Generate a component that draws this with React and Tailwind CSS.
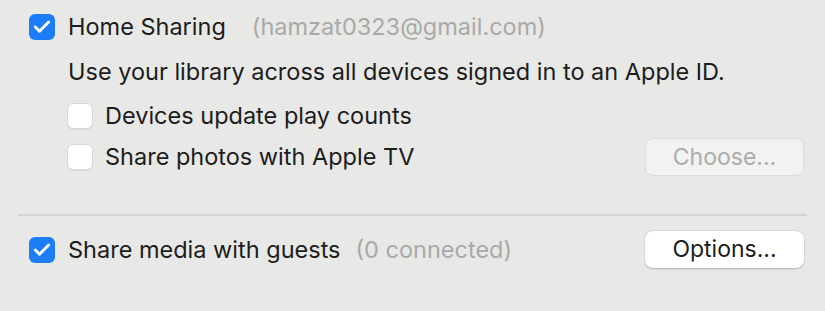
import { Check } from 'lucide-react';

function Checkbox({ checked }) {
    if (checked) {
        return (
            <span className="flex h-[26px] w-[26px] shrink-0 items-center justify-center rounded-[6px] bg-[#1d7df6]">
                <Check className="h-[20px] w-[20px] text-white" strokeWidth={3.5} />
            </span>
        );
    }
    return (
        <span className="h-[26px] w-[26px] shrink-0 rounded-[6px] border border-[#d6d6d4] bg-white shadow-[0_1px_1px_rgba(0,0,0,0.06)]" />
    );
}

function Button({ children, disabled }) {
    return (
        <button
            className={
                disabled
                    ? 'h-[38px] w-[159px] rounded-[8px] border border-[#dcdcda] bg-[#f2f2f1] text-[23px] text-[#acacac]'
                    : 'h-[37px] w-[159px] rounded-[8px] bg-white text-[23px] text-[#1c1c1c] shadow-[0_0.5px_2px_rgba(0,0,0,0.25)]'
            }
        >
            {children}
        </button>
    );
}

export default function App() {
    return (
        <div
            className="h-[311px] w-[825px] overflow-hidden bg-[#e8e8e6] text-[23.5px] text-[#1c1c1c]"
            style={{ fontFamily: 'Inter, "Liberation Sans", sans-serif' }}
        >
            <div className="flex flex-col pl-[29px] pr-[21px] pt-[13px]">
                <div className="flex h-[27px] items-center gap-[13px]">
                    <Checkbox checked />
                    <span>Home Sharing</span>
                    <span className="ml-[13px] text-[#a9a9a9]">(hamzat0323@gmail.com)</span>
                </div>
                <div className="ml-[39px] mt-[18px] flex h-[27px] items-center">
                    Use your library across all devices signed in to an Apple ID.
                </div>
                <div className="ml-[38px] mt-[17px] flex h-[27px] items-center gap-[12px]">
                    <Checkbox />
                    <span>Devices update play counts</span>
                </div>
                <div className="ml-[38px] mt-[9px] flex items-center justify-between">
                    <div className="flex h-[27px] items-center gap-[12px]">
                        <Checkbox />
                        <span>Share photos with Apple TV</span>
                    </div>
                    <Button disabled>Choose...</Button>
                </div>
            </div>
            <div className="ml-[18px] mr-[18px] mt-[38px] h-[2px] bg-[#d3d3d1]" />
            <div className="mt-[15px] flex items-center justify-between pl-[29px] pr-[21px]">
                <div className="flex items-center gap-[13px]">
                    <Checkbox checked />
                    <span>Share media with guests</span>
                    <span className="ml-[2px] text-[#a9a9a9]">(0 connected)</span>
                </div>
                <Button>Options...</Button>
            </div>
        </div>
    );
}
